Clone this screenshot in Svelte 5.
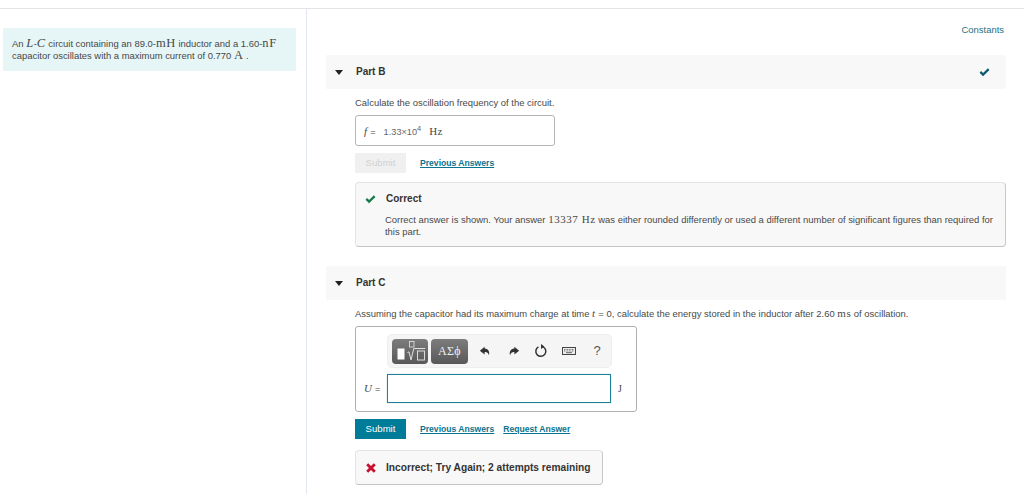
<script>
  const tools = ['undo', 'redo', 'reset', 'kbd', 'help'];
</script>

<div class="page">
  <aside class="left">
    <div class="intro">
      An <i class="m">L</i>-<i class="m">C</i> circuit containing an 89.0-<span class="m">mH</span> inductor and a 1.60-<span class="m">nF</span><br />
      capacitor oscillates with a maximum current of 0.770 <span class="m">A</span> .
    </div>
  </aside>

  <main class="right">
    <div class="constants"><span>Constants</span></div>

    <section class="head">
      <svg class="tri" viewBox="0 0 8 5"><path d="M0 0h8L4 5z" /></svg>
      <b>Part B</b>
      <svg class="done" viewBox="0 0 12 10"><path d="M0.5 5.2 2.3 3.4 4.4 5.5 9.8 0.4 11.5 2.1 4.4 9.2z" /></svg>
    </section>

    <div class="body">
      <p class="q first">Calculate the oscillation frequency of the circuit.</p>
      <div class="answer">
        <i class="m">f</i>&nbsp;= &nbsp;&nbsp;<span class="val">1.33×10<sup>4</sup></span>&nbsp;&nbsp; <span class="m unit">Hz</span>
      </div>
      <div class="actions a1">
        <span class="btn off">Submit</span>
        <a href="#b">Previous Answers</a>
      </div>
      <div class="fb correct">
        <div class="fbt">
          <svg class="ok" viewBox="0 0 12 10"><path d="M0.5 5.2 2.3 3.4 4.4 5.5 9.8 0.4 11.5 2.1 4.4 9.2z" /></svg>
          <b>Correct</b>
        </div>
        <p>Correct answer is shown. Your answer <span class="m">13337 Hz</span> was either rounded differently or used a different number of significant figures than required for this part.</p>
      </div>
    </div>

    <section class="head partc">
      <svg class="tri" viewBox="0 0 8 5"><path d="M0 0h8L4 5z" /></svg>
      <b>Part C</b>
    </section>

    <div class="body">
      <p class="q second">Assuming the capacitor had its maximum charge at time <i class="m">t</i> = 0, calculate the energy stored in the inductor after 2.60 <span class="m">ms</span> of oscillation.</p>
      <div class="editor">
        <div class="toolbar">
          <span class="tb templ">
            <svg viewBox="0 0 36 25" width="36" height="25">
              <rect x="5.5" y="9.5" width="7" height="11" fill="#fff" />
              <rect x="17.5" y="2.5" width="4.5" height="5.5" fill="none" stroke="#e8e8e8" stroke-width="0.8" />
              <path d="M15.5 13.5l1.5-0.6 2 8 2.8-11.4h11.5" fill="none" stroke="#eee" stroke-width="0.9" />
              <rect x="25.5" y="12" width="7" height="9" fill="none" stroke="#e8e8e8" stroke-width="0.9" />
            </svg>
          </span>
          <span class="tb greek">ΑΣϕ</span>
          <div class="tools">
            {#each tools as t}
              <span class="tool">
                {#if t === 'undo'}
                  <svg viewBox="0 0 12 12" width="13" height="13"><path d="M5.2 1.5 0.8 5.2 5.2 8.8V6.4c1.9-.2 3.3.6 4 3.1.9-3.7-.8-6.1-4-6.3z" fill="#333" /></svg>
                {:else if t === 'redo'}
                  <svg viewBox="0 0 12 12" width="13" height="13"><path d="M6.8 1.5 11.2 5.2 6.8 8.8V6.4c-1.9-.2-3.3.6-4 3.1-.9-3.7.8-6.1 4-6.3z" fill="#333" /></svg>
                {:else if t === 'reset'}
                  <svg viewBox="0 0 14 14" width="14" height="14"><path d="M8.6 2.6A5 5 0 1 1 4.4 2.9" fill="none" stroke="#333" stroke-width="1.5" /><path d="M7 0 10.4 2.6 7 5z" fill="#333" /></svg>
                {:else if t === 'kbd'}
                  <svg viewBox="0 0 14 8" width="14" height="8"><rect x="0.5" y="0.5" width="13" height="7" fill="#eee" stroke="#444" /><path d="M2 2.5h10M2 4h10" stroke="#777" stroke-dasharray="1 .6" /><path d="M4 5.7h6" stroke="#666" /></svg>
                {:else}
                  <span class="qm">?</span>
                {/if}
              </span>
            {/each}
          </div>
        </div>
        <div class="inrow">
          <span class="lab"><i class="m">U</i> =</span>
          <div class="field"></div>
          <span class="m jay">J</span>
        </div>
      </div>
      <div class="actions a2">
        <span class="btn on">Submit</span>
        <a href="#p">Previous Answers</a>
        <a href="#r">Request Answer</a>
      </div>
      <div class="fb wrong">
        <svg class="x" viewBox="0 0 10 10"><path d="M0.2 2.2 2.2 0.2 5 3 7.8 0.2 9.8 2.2 7 5 9.8 7.8 7.8 9.8 5 7 2.2 9.8 0.2 7.8 3 5z" /></svg>
        <b>Incorrect; Try Again; 2 attempts remaining</b>
      </div>
    </div>
  </main>
</div>

<style>
  :global(body) {
    margin: 0;
    background: #fff;
  }
  .page {
    display: grid;
    grid-template-columns: 307px 1fr;
    grid-template-rows: 1px 1fr;
    width: 1024px;
    height: 494px;
    box-sizing: border-box;
    padding-top: 8px;
    overflow: hidden;
    font-family: "Liberation Sans", Arial, sans-serif;
    font-size: 9.45px;
    line-height: 12px;
    color: #484848;
  }
  .page::before {
    content: "";
    grid-column: 1 / -1;
    height: 1px;
    background: #e4e4e4;
  }
  .left {
    border-right: 1px solid #e3e8ee;
    padding: 19px 10px 0 3px;
  }
  .intro {
    background: #e6f5f6;
    height: 43px;
    box-sizing: border-box;
    padding: 10px 9px;
    line-height: 12px;
    white-space: nowrap;
  }
  .intro .m {
    font-size: 12.5px;
    line-height: 10px;
  }
  .m {
    font-family: "Liberation Serif", "Times New Roman", serif;
    font-size: 11px;
    letter-spacing: 0.55px;
  }
  .right {
    padding-right: 18px;
  }
  .constants {
    display: flex;
    justify-content: flex-end;
    height: 46px;
    padding: 15px 2px 0 0;
    box-sizing: border-box;
    color: #1b6f84;
  }
  .head {
    display: flex;
    align-items: center;
    height: 34px;
    margin-left: 19px;
    background: #f8f8f8;
    color: #333;
  }
  .head b {
    font-size: 10px;
    font-weight: 700;
  }
  .tri {
    width: 8px;
    height: 5px;
    margin: 0 13px 0 9px;
    fill: #222;
  }
  .done {
    width: 11px;
    height: 9px;
    margin-left: auto;
    margin-right: 16px;
    fill: #0e5a70;
  }
  .partc {
    margin-top: 19px;
  }
  .body {
    margin-left: 48px;
  }
  .q {
    margin: 0;
  }
  .first {
    padding-top: 8px;
  }
  .second {
    padding-top: 7px;
  }
  .answer {
    width: 200px;
    height: 31px;
    margin-top: 6px;
    box-sizing: border-box;
    padding: 9px 8px 0;
    border: 1px solid #b5b5b5;
    border-radius: 3px;
    white-space: nowrap;
    line-height: 13px;
  }
  .val {
    font-size: 9.2px;
    color: #666;
  }
  sup {
    font-size: 7.5px;
    line-height: 0;
  }
  .actions {
    display: flex;
    align-items: center;
    height: 20px;
    font-size: 8.6px;
  }
  .a1 {
    margin-top: 7px;
  }
  .a2 {
    margin-top: 7px;
  }
  .btn {
    display: flex;
    align-items: center;
    justify-content: center;
    width: 51px;
    height: 20px;
    margin-right: 14px;
    font-size: 9.6px;
  }
  .off {
    background: #f0f0f0;
    color: #d0d0d0;
  }
  .on {
    background: #007c99;
    color: #fff;
  }
  a {
    color: #0a7390;
    font-weight: 700;
    text-decoration: underline;
    margin-right: 9px;
  }
  .fb {
    background: #f8f8f8;
    border: 1px solid #e4e4e4;
    border-right-color: #c8c8c8;
    border-bottom-color: #c4c4c4;
    border-radius: 4px;
    box-sizing: border-box;
  }
  .correct {
    height: 65px;
    margin-top: 9px;
    padding: 10px 10px 0 9px;
  }
  .fbt {
    display: flex;
    align-items: center;
    height: 12px;
  }
  .ok {
    width: 11px;
    height: 9px;
    margin-right: 10px;
    fill: #16794a;
  }
  .correct b {
    font-weight: 700;
    font-size: 10px;
    color: #333;
  }
  .correct p {
    margin: 8px 0 0 20px;
    line-height: 12px;
  }
  .editor {
    width: 282px;
    height: 86px;
    margin-top: 6px;
    box-sizing: border-box;
    border: 1px solid #b0b0b0;
    border-radius: 3px;
    padding-top: 7px;
  }
  .toolbar {
    display: flex;
    align-items: center;
    height: 34px;
    width: 225px;
    margin-left: 31px;
    box-sizing: border-box;
    padding-left: 4px;
    background: #f5f5f5;
    border: 1px solid #eee;
    border-radius: 5px;
  }
  .tb {
    display: flex;
    align-items: center;
    justify-content: center;
    width: 36px;
    height: 25px;
    margin-right: 3px;
    border-radius: 4px;
    background: linear-gradient(#7d7d7d, #585858);
    color: #f2f2f2;
    box-sizing: border-box;
  }
  .greek {
    width: 37px;
    font-family: "Liberation Serif", serif;
    font-size: 12px;
    letter-spacing: 0.3px;
  }
  .tools {
    display: grid;
    grid-template-columns: repeat(5, 28px);
  }
  .tool {
    display: flex;
    align-items: center;
    justify-content: center;
  }
  .qm {
    font-size: 13px;
    color: #555;
  }
  .inrow {
    display: flex;
    align-items: center;
    height: 29px;
    margin-top: 6px;
  }
  .lab {
    width: 31px;
    box-sizing: border-box;
    padding-left: 8px;
    font-size: 9px;
  }
  .field {
    width: 224px;
    height: 29px;
    box-sizing: border-box;
    border: 1.5px solid #1e8099;
    background: #fff;
    box-shadow: 0 0 1px #9bc6d2;
  }
  .jay {
    margin-left: 7px;
    font-size: 10px;
  }
  .wrong {
    display: flex;
    align-items: center;
    width: 248px;
    height: 35px;
    margin-top: 11px;
    padding-left: 10px;
  }
  .x {
    width: 10px;
    height: 10px;
    margin-right: 10px;
    fill: #c8102e;
  }
  .wrong b {
    font-size: 10.2px;
    font-weight: 700;
    white-space: nowrap;
    color: #333;
  }
</style>
